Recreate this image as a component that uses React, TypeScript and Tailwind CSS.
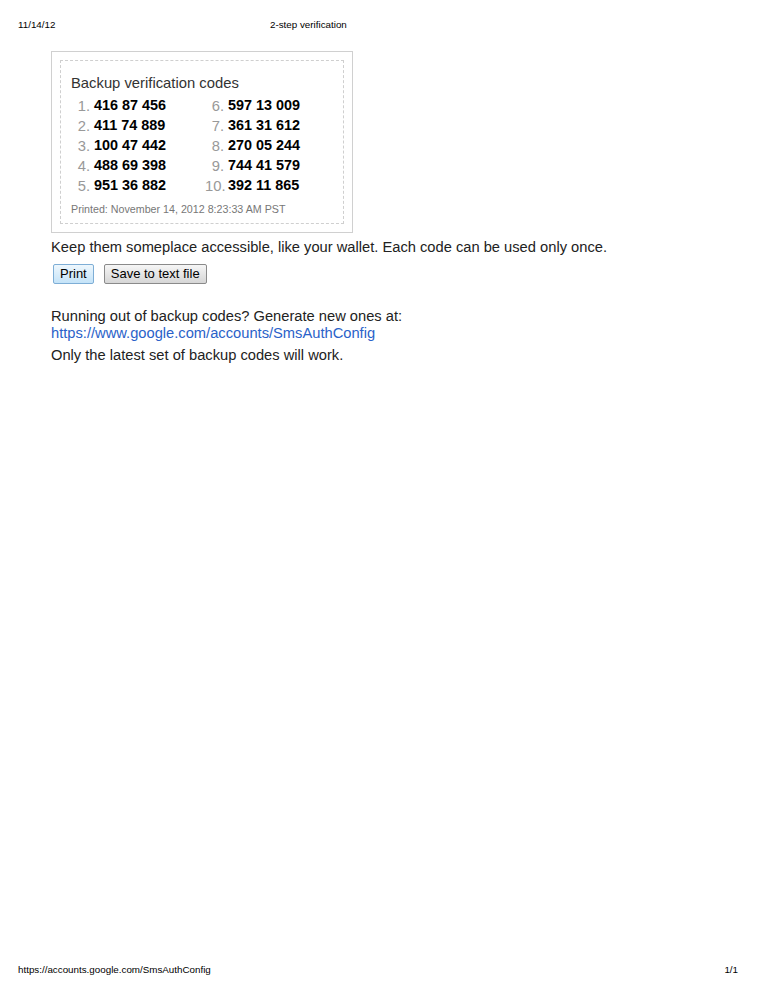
const codes: [string, string][] = [
  ["1.", "416 87 456"],
  ["2.", "411 74 889"],
  ["3.", "100 47 442"],
  ["4.", "488 69 398"],
  ["5.", "951 36 882"],
  ["6.", "597 13 009"],
  ["7.", "361 31 612"],
  ["8.", "270 05 244"],
  ["9.", "744 41 579"],
  ["10.", "392 11 865"],
];

function CodeCell({ label, code }: { label: string; code: string }) {
  return (
    <div className="flex h-[20px] items-center">
      <span className="w-[19px] text-right text-[14.8px] text-[#999]">{label}</span>
      <span className="ml-[4px] text-[14.4px] font-bold text-black">{code}</span>
    </div>
  );
}

export default function App() {
  const left = codes.slice(0, 5);
  const right = codes.slice(5);

  return (
    <div
      className="relative flex h-[994px] w-[768px] flex-col bg-white text-[#222]"
      style={{ fontFamily: '"Liberation Sans", Arial, sans-serif' }}
    >
      <div className="flex h-[51px] items-center text-[9.8px] text-black">
        <span className="ml-[18px] w-[252px]">11/14/12</span>
        <span>2-step verification</span>
      </div>

      <div className="ml-[51px] flex-1">
        <div className="w-[302px] border border-[#d0d0d0] p-[8px]">
          <div className="border border-dashed border-[#cfcfcf] px-[10px] pt-[12px] pb-[7px]">
            <div className="h-[20px] text-[14.8px] leading-[20px] text-[#333]">
              Backup verification codes
            </div>
            <div className="mt-[3px] grid grid-cols-[134px_auto]">
              <div>
                {left.map(([l, c]) => (
                  <CodeCell key={l} label={l} code={c} />
                ))}
              </div>
              <div>
                {right.map(([l, c]) => (
                  <CodeCell key={l} label={l} code={c} />
                ))}
              </div>
            </div>
            <div className="mt-[6px] h-[14px] text-[10.7px] leading-[14px] text-[#777]">
              Printed: November 14, 2012 8:23:33 AM PST
            </div>
          </div>
        </div>

        <p className="mt-[5px] text-[14.7px] leading-[18px]">
          Keep them someplace accessible, like your wallet. Each code can be used only once.
        </p>

        <div className="mt-[8px] flex gap-[10px] pl-[2px]">
          <button className="h-[20px] rounded-[2px] border border-[#7eaed6] bg-gradient-to-b from-[#eef7fd] to-[#c4e3f8] px-[6px] text-[13px] leading-[18px] text-black">
            Print
          </button>
          <button className="h-[20px] rounded-[2px] border border-[#8a8a8a] bg-gradient-to-b from-[#f6f6f6] to-[#d6d6d6] px-[6px] text-[13px] leading-[18px] text-black">
            Save to text file
          </button>
        </div>

        <p className="mt-[24px] text-[14.7px] leading-[17px]">
          Running out of backup codes? Generate new ones at:
          <br />
          <a className="text-[#2a62c9]">https://www.google.com/accounts/SmsAuthConfig</a>
        </p>
        <p className="mt-[5px] text-[14.7px] leading-[17px]">Only the latest set of backup codes will work.</p>
      </div>

      <div className="flex h-[50px] items-center justify-between pt-[3px] text-[9.8px] text-black">
        <span className="ml-[18px]">https://accounts.google.com/SmsAuthConfig</span>
        <span className="mr-[30px]">1/1</span>
      </div>
    </div>
  );
}
